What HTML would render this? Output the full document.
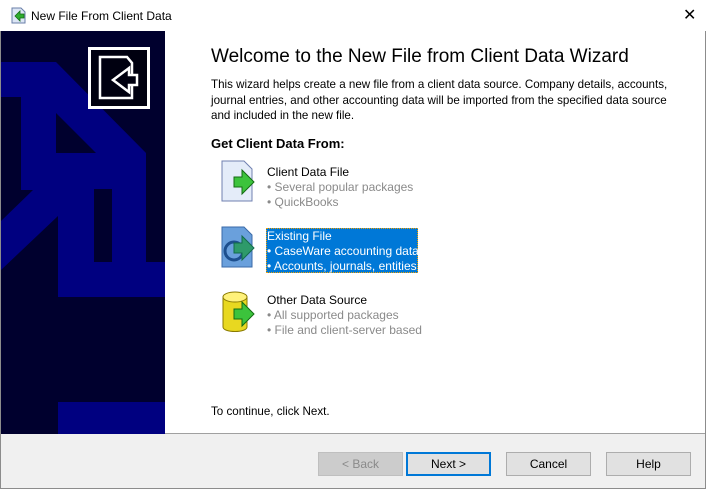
<!DOCTYPE html>
<html><head><style>
*{margin:0;padding:0;box-sizing:border-box}
body{width:706px;height:489px;background:#f0f0f0;font-family:"Liberation Sans",sans-serif;position:relative;overflow:hidden}
.win{position:absolute;left:0;top:0;width:706px;height:489px;border:1px solid #8c8c8c}
.title{position:absolute;left:0;top:0;width:706px;height:31px;background:#fff;font-size:12px;color:#000}
.title span{position:absolute;left:31px;top:9px}
.content{position:absolute;left:1px;top:31px;width:704px;height:403px;background:#fff;border-bottom:1px solid #a0a0a0}
.t{position:absolute;white-space:nowrap;color:#000}
.g{color:#8a8a8a}
.btn{position:absolute;top:452px;height:24px;width:85px;background:#e1e1e1;border:1px solid #adadad;font-size:12px;text-align:center;line-height:22px}
</style></head><body>
<div class="win"></div>
<div class="title">
<svg style="position:absolute;left:11px;top:7px" width="16" height="17" viewBox="0 0 16 17"><path d="M1 1h9l4 4v11H1z" fill="#dce6f5" stroke="#6a7fa8"/><path d="M4 9l5-5v3h4v4H9v3z" fill="#2fae2f" stroke="#136b13" stroke-width=".8"/></svg>
<span>New File From Client Data</span><span style="left:683px;top:5px;font-size:16px">✕</span></div>
<div class="content">
<svg style="position:absolute;left:0;top:0" width="164" height="403" viewBox="0 0 164 403">
<rect width="164" height="403" fill="#00002e"/>
<g fill="#000080">
<polygon points="0,31 55,31 145,122 145,231 164,231 164,266 57,266 57,185 0,239"/>
<rect x="57" y="371" width="107" height="32"/>
</g>
<g fill="#00002e">
<polygon points="55,82 55,122 95,122"/>
<rect x="93" y="158" width="18" height="73"/>
<polygon points="0,66 20,66 20,159 32,159 0,190"/>
</g>
<rect x="88.5" y="17.5" width="59" height="59" fill="#000010" stroke="#fff" stroke-width="3"/>
<path d="M99 26h27l5 6v35H99z" fill="none" stroke="#fff" stroke-width="2.5"/>
<path d="M128 37v7h8v10h-8v7l-16-12z" fill="#000010" stroke="#fff" stroke-width="2.5"/>
</svg>
<div class="t" style="left:210px;top:15px;font-size:19px;color:#000">Welcome to the New File from Client Data Wizard</div>
<div class="t" style="left:210px;top:46px;font-size:11.6px;line-height:15.5px">This wizard helps create a new file from a client data source. Company details, accounts,<br>journal entries, and other accounting data will be imported from the specified data source<br>and included in the new file.</div>
<div class="t" style="left:210px;top:105px;font-size:13px;font-weight:bold">Get Client Data From:</div>

<svg style="position:absolute;left:219px;top:128px" width="36" height="44" viewBox="0 0 36 44"><path d="M2 2h22l8 8v32H2z" fill="#e4ecf9" stroke="#7080b0"/><path d="M14 18h8v-7l12 12-12 12v-7h-8z" fill="#3cc33c" stroke="#136b13"/></svg>
<div class="t" style="left:266px;top:134px;font-size:12px;line-height:15px">Client Data File<br><span class="g">• Several popular packages<br>• QuickBooks</span></div>

<svg style="position:absolute;left:219px;top:194px" width="36" height="44" viewBox="0 0 36 44"><path d="M2 2h22l8 8v32H2z" fill="#6aa0dc" stroke="#3a6aa8"/><circle cx="14" cy="26" r="9" fill="none" stroke="#1d4f8e" stroke-width="3"/><path d="M14 18h8v-7l12 12-12 12v-7h-8z" fill="#2e9a6a" stroke="#136b4b"/></svg>
<div style="position:absolute;left:265px;top:197px;width:152px;height:45px;background:#0078d7;border:1px dotted #f0a000"></div>
<div class="t" style="left:266px;top:198px;font-size:12px;line-height:15px;color:#fff">Existing File<br>• CaseWare accounting data<br>• Accounts, journals, entities</div>

<svg style="position:absolute;left:219px;top:258px" width="36" height="46" viewBox="0 0 36 46"><path d="M3 8v30c0 6 24 6 24 0V8z" fill="#e8d820" stroke="#8a7a00"/><ellipse cx="15" cy="8" rx="12" ry="5" fill="#fff27a" stroke="#8a7a00"/><path d="M14 20h8v-7l12 12-12 12v-7h-8z" fill="#3cc33c" stroke="#136b13"/></svg>
<div class="t" style="left:266px;top:262px;font-size:12px;line-height:15px">Other Data Source<br><span class="g">• All supported packages<br>• File and client-server based</span></div>

<div class="t" style="left:210px;top:374px;font-size:11.6px">To continue, click Next.</div>
</div>
<div class="btn" style="left:318px;background:#cccccc;border-color:#bfbfbf;color:#8a8a8a">&lt; Back</div>
<div class="btn" style="left:406px;border:2px solid #0078d7;line-height:20px">Next &gt;</div>
<div class="btn" style="left:506px">Cancel</div>
<div class="btn" style="left:606px">Help</div>
</body></html>
